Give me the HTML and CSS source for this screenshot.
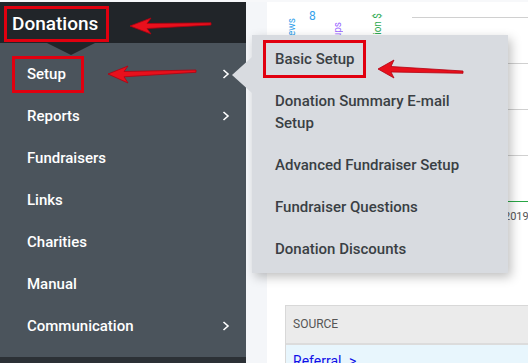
FILE: index.html
```html
<!DOCTYPE html>
<html>
<head>
  <title>Donations - Setup</title>
  <meta charset="UTF-8">
  <link rel="stylesheet" href="styles.css">
</head>
<body>
<div class="app">
  <aside class="sidebar">
    <div class="brand"><span class="mark brand-mark">Donations</span></div>
    <nav class="nav">
      <div class="nav-item"><span class="mark setup-mark">Setup</span><svg class="chev" viewBox="0 0 8 10"><polyline points="1.5,1 6,5 1.5,9"/></svg></div>
      <div class="nav-item"><span class="label">Reports</span><svg class="chev" viewBox="0 0 8 10"><polyline points="1.5,1 6,5 1.5,9"/></svg></div>
      <div class="nav-item"><span class="label">Fundraisers</span></div>
      <div class="nav-item"><span class="label">Links</span></div>
      <div class="nav-item"><span class="label">Charities</span></div>
      <div class="nav-item"><span class="label">Manual</span></div>
      <div class="nav-item"><span class="label">Communication</span><svg class="chev" viewBox="0 0 8 10"><polyline points="1.5,1 6,5 1.5,9"/></svg></div>
    </nav>
    <div class="side-foot"></div>
  </aside>

  <main class="main">
    <div class="panel">
      <div class="chart">
        <span class="axis views">Page Views</span>
        <span class="count">8</span>
        <span class="axis signups">Signups</span>
        <span class="axis money">Donation $</span>
        <div class="grid">
          <div class="line"></div>
          <div class="line"></div>
          <div class="line"></div>
          <div class="line"></div>
          <div class="line green"></div>
        </div>
        <span class="date">2019</span>
      </div>
      <div class="table">
        <div class="thead">SOURCE</div>
        <div class="trow"><a href="#">Referral</a> <span class="go">&gt;</span></div>
      </div>
    </div>
  </main>
</div>

<div class="dropdown">
  <div class="drop-item"><span class="mark basic-mark">Basic Setup</span></div>
  <div class="drop-item">Donation Summary E-mail Setup</div>
  <div class="drop-item">Advanced Fundraiser Setup</div>
  <div class="drop-item">Fundraiser Questions</div>
  <div class="drop-item">Donation Discounts</div>
</div>

<svg class="arrows" width="528" height="363" viewBox="0 0 528 363">
  <polygon points="130,26 151,18 147,23.5 211,22.8 211,25 147,28.5 151,34"/>
  <polygon points="108,74 128,66 124,71.5 196,70 196,72.3 124,76.8 128,83"/>
  <polygon points="378,69 394,60 391,66.5 463,71 463,73.3 391,72 394,78"/>
</svg>
</body>
</html>
```

FILE: styles.css
```css
body {
  margin: 0; width: 528px; height: 363px; overflow: hidden;
  background: #f7f8fa; font-family: Roboto, "Liberation Sans", sans-serif;
  position: relative;
}
.app { display: flex; height: 361px; margin-top: 2px; }

/* sidebar */
.sidebar {
  width: 246px; flex-shrink: 0; background: #4b545c; display: flex; flex-direction: column;
}
.brand {
  height: 41px; background: #212529; position: relative;
  padding: 4px 0 0 4px; box-sizing: border-box;
}
.brand::after {
  content: ""; position: absolute; left: 47px; top: 41px;
  border-top: 12px solid #212529; border-left: 24px solid transparent; border-right: 24px solid transparent;
}
.mark { display: inline-block; border: 3px solid #e1000f; }
.brand-mark {
  color: #fff; font-size: 19px; font-weight: 500; line-height: 24px;
  padding: 3px 8px 3px 5px;
}
.nav { flex: 1; padding-top: 10px; }
.nav-item {
  height: 42px; display: flex; align-items: center; justify-content: space-between;
  padding: 0 16px 0 27px; color: #fff; font-size: 15px; font-weight: 500;
}
.setup-mark { margin-left: -15px; padding: 4px 15px 5px 12px; line-height: 22px; }
.chev { width: 8px; height: 10px; fill: none; stroke: #fff; stroke-width: 1.6; }
.side-foot { height: 6px; background: #2c3136; }

/* main */
.main { flex: 1; min-width: 0; background: #f4f6f9; padding-left: 21px; }
.panel { background: #fff; height: 100%; overflow: hidden; }
.chart { position: relative; height: 303px; }
.axis {
  position: absolute; font-size: 10px; line-height: 7px;
  writing-mode: vertical-rl; transform: rotate(180deg); white-space: nowrap;
}
.views { left: 21px; top: 16px; color: #36a2eb; }
.signups { left: 67px; top: 20px; color: #9966ff; }
.money { left: 107px; top: 11px; color: #2eaa52; }
.count { position: absolute; left: 42px; top: 7px; font-size: 12px; color: #36a2eb; }
.grid { margin-left: 145px; padding-top: 15px; }
.line { border-top: 1px solid #d0d0d0; margin-bottom: 45px; }
.line.green { border-top-color: #28a745; }
.date { position: absolute; left: 237px; top: 208px; font-size: 11px; color: #555; }

.table { margin-left: 18px; width: 300px; border: 1px solid #d8d8d8; }
.thead {
  height: 37px; line-height: 37px; background: #ebebeb; border-bottom: 2px solid #dcdcdc;
  padding-left: 7px; font-size: 12px; color: #555;
}
.trow { height: 40px; background: #e8f6fd; padding: 8px 0 0 7px; font-size: 14px; }
.trow a { color: #1010e8; text-decoration: none; }
.go { color: #1010e8; margin-left: 4px; }

/* dropdown */
.dropdown {
  position: absolute; left: 252px; top: 35px; width: 256px; box-sizing: border-box;
  padding: 3px 33px 3px 23px; background: #d8dbe0;
  box-shadow: 3px 4px 10px rgba(0,0,0,0.25);
}
.dropdown::before {
  content: ""; position: absolute; left: -20px; top: 22px;
  border-right: 20px solid #d8dbe0; border-top: 18px solid transparent; border-bottom: 18px solid transparent;
}
.drop-item {
  padding: 10px 0; line-height: 22px; font-size: 15px; font-weight: 500; color: #3a3f44;
}
.basic-mark { margin: -8px 0 -8px -12px; padding: 5px 8px 5px 9px; line-height: 22px; }

.arrows { position: absolute; left: 0; top: 0; pointer-events: none; }
.arrows polygon { fill: #e8101c; stroke: #b30010; stroke-width: 0.8; stroke-linejoin: round; }
```
